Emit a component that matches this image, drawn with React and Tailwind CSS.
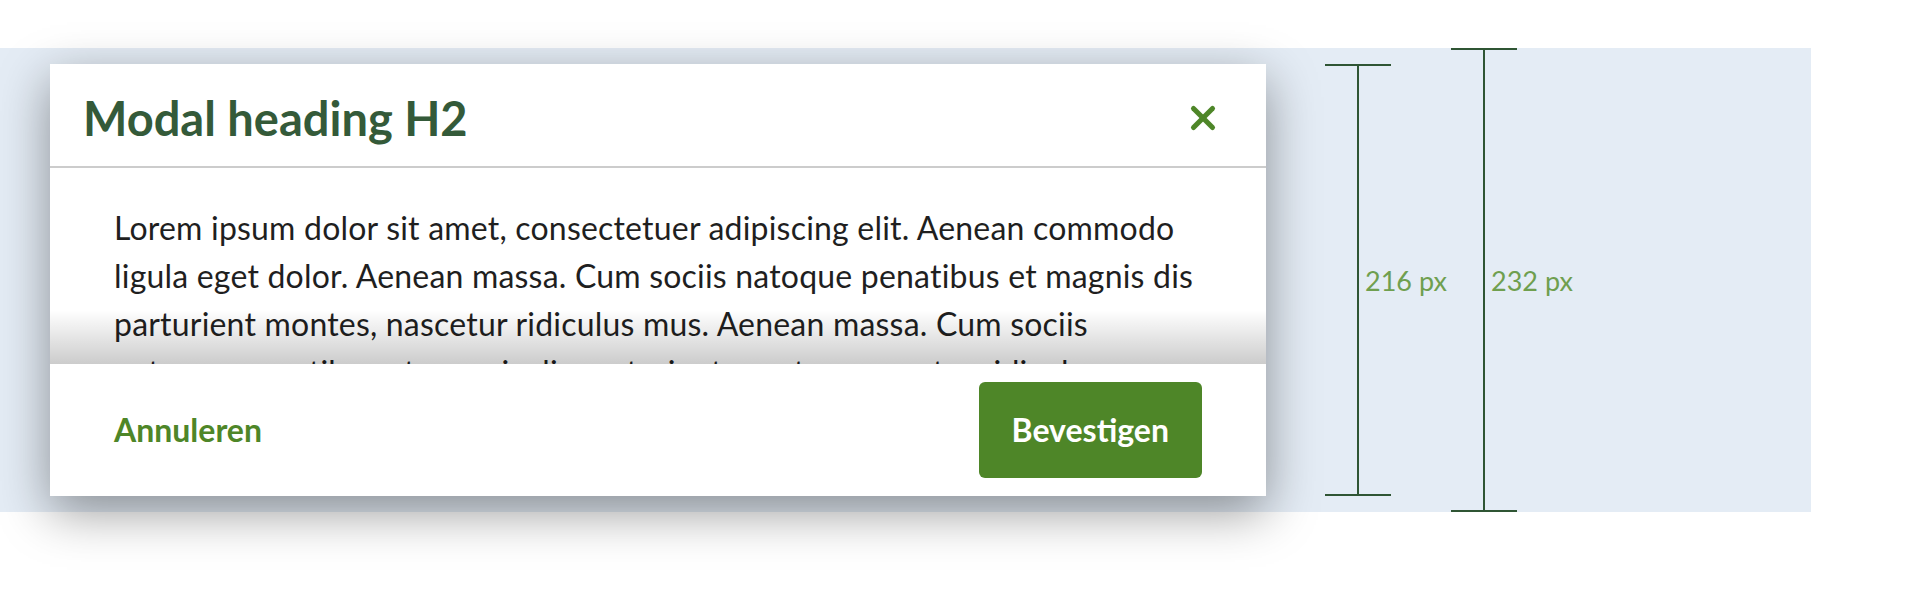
import { X } from "lucide-react";

const font = { fontFamily: "Lato, 'Noto Sans', sans-serif" };

function Marker({ label, tall }) {
    return (
        <div
            className={
                tall
                    ? "relative flex flex-col w-[66px] h-[464px] ml-[60px]"
                    : "relative flex flex-col w-[66px] h-[432px] mt-4 ml-[59px]"
            }
        >
            <div className="h-[2px] w-full bg-[#2f5534]" />
            <div className="flex-1 flex justify-center">
                <div className="w-[2px] bg-[#2f5534]" />
            </div>
            <div className="h-[2px] w-full bg-[#2f5534]" />
            <span className="absolute left-[40px] top-1/2 -translate-y-1/2 whitespace-nowrap text-[27px] leading-none text-[#6f9f4f]">
                {label}
            </span>
        </div>
    );
}

function Modal() {
    return (
        <div className="flex flex-col w-[1216px] h-[432px] my-4 bg-white shadow-[0_16px_48px_rgba(0,0,0,0.4)]">
            <div className="flex items-center justify-between h-[104px] pt-[6px] pl-[33px] pr-[44px] border-b-2 border-[#cccccc]">
                <h2 className="text-[47px] font-bold text-[#345a39]">Modal heading H2</h2>
                <button className="text-[#4e8628]">
                    <X size={38} strokeWidth={3.2} />
                </button>
            </div>

            <div className="relative flex-1 overflow-hidden px-16 pt-[36px]">
                <p className="text-[32px] leading-[48px] tracking-[0.2px] text-[#1f1f1f]">
                    Lorem ipsum dolor sit amet, consectetuer adipiscing elit. Aenean commodo
                    ligula eget dolor. Aenean massa. Cum sociis natoque penatibus et magnis dis
                    parturient montes, nascetur ridiculus mus. Aenean massa. Cum sociis
                    natoque penatibus et magnis dis parturient montes, nascetur ridiculus mus.
                </p>
                <div className="absolute left-0 right-0 bottom-0 h-[54px] bg-gradient-to-b from-white/0 to-black/20" />
            </div>

            <div className="flex items-center justify-between h-[132px] px-16">
                <button className="text-[32px] font-bold text-[#4e8628]">Annuleren</button>
                <button className="h-[96px] px-[33px] rounded-md bg-[#4e8628] text-[32px] font-bold text-white">
                    Bevestigen
                </button>
            </div>
        </div>
    );
}

export default function App() {
    return (
        <div className="w-[1910px] h-[592px] bg-white pt-12 overflow-hidden" style={font}>
            <div className="flex items-start w-[1811px] h-[464px] pl-[50px] bg-[#e4ecf5]">
                <Modal />
                <Marker label="216 px" />
                <Marker label="232 px" tall />
            </div>
        </div>
    );
}
